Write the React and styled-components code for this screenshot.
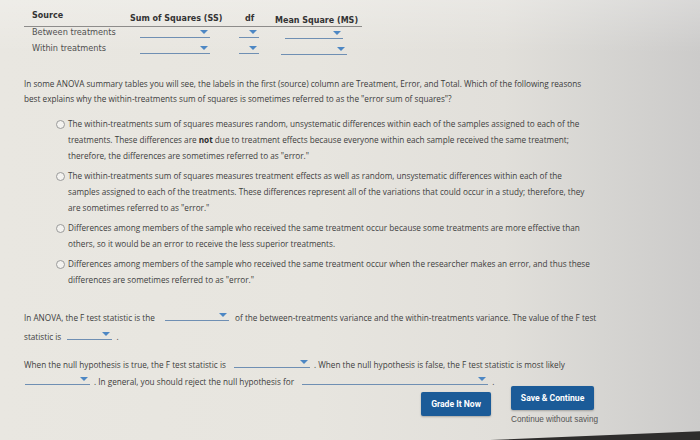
import styled, { createGlobalStyle } from 'styled-components';

const GlobalStyle = createGlobalStyle`
  *, *::before, *::after {
    box-sizing: border-box;
  }
  html, body {
    margin: 0;
    padding: 0;
  }
  body {
    font-family: "Open Sans", "DejaVu Sans", sans-serif;
    color: #3e3e3e;
  }
`;

const Page = styled.div`
  position: relative;
  width: 700px;
  height: 440px;
  padding: 10px 0 0 24px;
  overflow: hidden;
  background:
    linear-gradient(180deg, rgba(255, 255, 255, 0.25) 0%, rgba(255, 255, 255, 0) 12%),
    linear-gradient(90deg, #e9e7e1 0%, #e7e5df 45%, #e1dfda 72%, #d6d5d2 86%, #cccbca 100%);
  font-size: 8.2px;

  &::after {
    content: '';
    position: absolute;
    left: 0;
    right: 0;
    bottom: 0;
    height: 16px;
    background: #2e2d2c;
    clip-path: polygon(70% 100%, 100% 45%, 100% 100%);
  }
`;

const Table = styled.div`
  display: grid;
  grid-template-columns: 106px 106px 36px 90px;
  width: 338px;
  font-family: "DejaVu Sans", "Open Sans", sans-serif;
  font-size: 8.2px;
`;

const HeadCell = styled.div`
  height: 17px;
  display: flex;
  align-items: flex-end;
  padding-left: ${(p) => p.$pad || 0}px;
  padding-bottom: ${(p) => p.$lift || 0}px;
  border-bottom: 1px solid #8d8c8a;
  font-weight: 700;
  font-size: 8px;
  color: #333;
  white-space: nowrap;
`;

const Cell = styled.div`
  height: 16px;
  display: flex;
  align-items: flex-start;
  padding-left: ${(p) => p.$pad || 0}px;
  color: #505050;
  line-height: 10px;
  white-space: nowrap;
`;

const Drop = styled.span`
  position: relative;
  display: inline-block;
  width: ${(p) => p.$w}px;
  height: ${(p) => p.$h || 11}px;
  margin-left: ${(p) => p.$ml || 0}px;
  margin-right: ${(p) => p.$mr || 0}px;
  border-bottom: 1px solid #6f8fb3;
  vertical-align: ${(p) => p.$va || 'baseline'};

  &::after {
    content: '';
    position: absolute;
    right: 2px;
    bottom: 3px;
    border-left: 4px solid transparent;
    border-right: 4px solid transparent;
    border-top: 4.5px solid #4d87c4;
  }
`;

const Question = styled.p`
  margin: 17px 0 0;
  line-height: 15px;
  white-space: nowrap;
  color: #3c3c3c;
`;

const Options = styled.div`
  display: flex;
  flex-direction: column;
  gap: 4px;
  margin: 10px 0 0 32px;
`;

const Option = styled.label`
  display: flex;
  align-items: flex-start;
  gap: 3px;
  line-height: 16px;
  white-space: nowrap;
  color: #3e3e3e;

  b {
    color: #2a2a2a;
  }
`;

const Radio = styled.span`
  flex: none;
  width: 9px;
  height: 9px;
  margin-top: 3.5px;
  border: 1px solid #9a9a9a;
  border-radius: 50%;
  background: #f3f2ef;
`;

const Fill = styled.div`
  margin-top: ${(p) => p.$mt}px;
  line-height: ${(p) => p.$lh}px;
  white-space: nowrap;
  color: #3e3e3e;
`;

const Actions = styled.div`
  display: flex;
  justify-content: flex-end;
  align-items: flex-start;
  gap: 20px;
  padding-right: 102px;
  margin-top: -4px;
`;

const Button = styled.button`
  width: ${(p) => p.$w}px;
  height: 24px;
  margin-top: ${(p) => p.$mt || 0}px;
  border: none;
  border-radius: 2px;
  background: #1b5b98;
  color: #fff;
  font-family: "Liberation Sans Narrow", "Roboto", sans-serif;
  font-weight: 700;
  font-size: 8.6px;
  box-shadow: 0 1px 2px rgba(0, 0, 0, 0.25);
  cursor: pointer;
`;

const SaveCol = styled.div`
  display: flex;
  flex-direction: column;
  align-items: flex-start;
  gap: 5px;
`;

const LinkText = styled.span`
  font-family: "Liberation Sans", sans-serif;
  font-size: 8.2px;
  color: #555;
  white-space: nowrap;
`;

export default function App() {
  return (
    <>
      <GlobalStyle />
      <Page>
        <Table>
          <HeadCell $pad={8} $lift={6}>Source</HeadCell>
          <HeadCell $lift={3}>Sum of Squares (SS)</HeadCell>
          <HeadCell $pad={9} $lift={3}>df</HeadCell>
          <HeadCell $pad={3} $lift={1}>Mean Square (MS)</HeadCell>

          <Cell $pad={8}>Between treatments</Cell>
          <Cell><Drop $w={70} $ml={10} $va="top" /></Cell>
          <Cell><Drop $w={20} $ml={3} $va="top" /></Cell>
          <Cell><Drop $w={58} $ml={13} $h={12} $va="top" /></Cell>

          <Cell $pad={8}>Within treatments</Cell>
          <Cell><Drop $w={70} $ml={10} $va="top" /></Cell>
          <Cell><Drop $w={20} $ml={3} $va="top" /></Cell>
          <Cell><Drop $w={66} $ml={9} $h={12} $va="top" /></Cell>
        </Table>

        <Question>
          In some ANOVA summary tables you will see, the labels in the first (source) column are Treatment, Error, and Total. Which of the following reasons
          <br />
          best explains why the within-treatments sum of squares is sometimes referred to as the "error sum of squares"?
        </Question>

        <Options>
          <Option>
            <Radio />
            <span>
              The within-treatments sum of squares measures random, unsystematic differences within each of the samples assigned to each of the
              <br />
              treatments. These differences are <b>not</b> due to treatment effects because everyone within each sample received the same treatment;
              <br />
              therefore, the differences are sometimes referred to as "error."
            </span>
          </Option>
          <Option>
            <Radio />
            <span>
              The within-treatments sum of squares measures treatment effects as well as random, unsystematic differences within each of the
              <br />
              samples assigned to each of the treatments. These differences represent all of the variations that could occur in a study; therefore, they
              <br />
              are sometimes referred to as "error."
            </span>
          </Option>
          <Option>
            <Radio />
            <span>
              Differences among members of the sample who received the same treatment occur because some treatments are more effective than
              <br />
              others, so it would be an error to receive the less superior treatments.
            </span>
          </Option>
          <Option>
            <Radio />
            <span>
              Differences among members of the sample who received the same treatment occur when the researcher makes an error, and thus these
              <br />
              differences are sometimes referred to as "error."
            </span>
          </Option>
        </Options>

        <Fill $mt={20} $lh={19}>
          In ANOVA, the F test statistic is the <Drop $w={64} $ml={8} $mr={4} /> of the between-treatments variance and the within-treatments variance. The value of the F test
          <br />
          statistic is <Drop $w={45} $ml={4} $mr={4} />.
        </Fill>

        <Fill $mt={10} $lh={17}>
          When the null hypothesis is true, the F test statistic is <Drop $w={76} $ml={6} $mr={4} />. When the null hypothesis is false, the F test statistic is most likely
          <br />
          <Drop $w={65} $ml={1} $mr={4} />. In general, you should reject the null hypothesis for <Drop $w={186} $ml={6} $mr={4} />.
        </Fill>

        <Actions>
          <Button $w={70} $mt={6}>Grade It Now</Button>
          <SaveCol>
            <Button $w={83}>Save &amp; Continue</Button>
            <LinkText>Continue without saving</LinkText>
          </SaveCol>
        </Actions>
      </Page>
    </>
  );
}
